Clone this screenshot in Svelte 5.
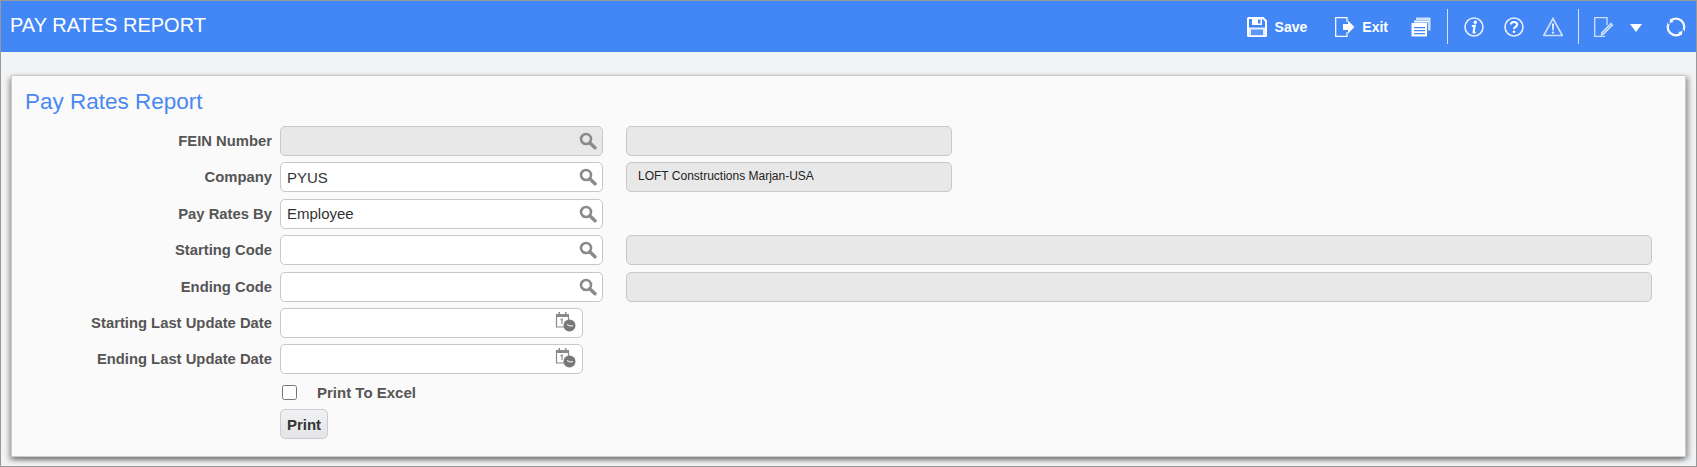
<script>
	const rows = [
		{ label: "FEIN Number", value: "", disabled: true, side: "short", sideText: "" },
		{ label: "Company", value: "PYUS", side: "short", sideText: "LOFT Constructions Marjan-USA" },
		{ label: "Pay Rates By", value: "Employee" },
		{ label: "Starting Code", value: "", side: "long", sideText: "" },
		{ label: "Ending Code", value: "", side: "long", sideText: "" }
	];
	const dates = ["Starting Last Update Date", "Ending Last Update Date"];
</script>

<div class="page">
	<header class="topbar">
		<h1>PAY RATES REPORT</h1>
		<div class="tools">
			<button class="tool save" type="button">
				<svg width="20" height="20" viewBox="0 0 20 20">
					<path d="M1.500 1h14.500l3 3v14.500a.5.5 0 0 1-.5.5H1.500a.5.5 0 0 1-.5-.5V1.500a.5.5 0 0 1 .5-.5z" fill="none" stroke="#fff" stroke-width="2" />
					<path d="M5 1h10v7H5z" fill="#fff" />
					<path d="M11 2.500h2.500v4H11z" fill="#4287f5" />
					<path d="M2 10.500h16V19H2z" fill="#e3edfd" />
					<path d="M4 12.500h12V18H4z" fill="#5d98f6" />
				</svg>
				Save
			</button>
			<button class="tool exit" type="button">
				<svg width="20" height="20" viewBox="0 0 20 20">
					<path d="M12 5V.7H.7v18.600H12V15" fill="none" stroke="#fff" stroke-width="1.200" />
					<path d="M8 7h5V3.500l6.500 6.500-6.500 6.500V13H8z" fill="#fff" />
				</svg>
				Exit
			</button>
			<button class="tool icon print" type="button" aria-label="Print">
				<svg width="20" height="20" viewBox="0 0 20 20">
					<path d="M5 .5h14.500v13H17V3H5z" fill="#cfe0fc" />
					<path d="M3 3.500h14v2H3z" fill="#fff" />
					<path d="M.5 6h15.500v13.500H.5z" fill="#fff" />
					<path d="M3 10h11v1.200H3zM3 13h11v1.200H3zM3 16h11v1.200H3z" fill="#4287f5" />
				</svg>
			</button>
			<span class="sep first"></span>
			<button class="tool icon info" type="button" aria-label="Info">
				<svg width="20" height="20" viewBox="0 0 20 20">
					<circle cx="10" cy="10" r="9" fill="none" stroke="#e3edfd" stroke-width="1.600" />
					<circle cx="11.300" cy="5.300" r="1.700" fill="#fff" />
					<path d="M7.800 9.300l3-.6-1.300 6.400c-.1.700.5.800 1.900-.2" fill="none" stroke="#fff" stroke-width="2" />
				</svg>
			</button>
			<button class="tool icon help" type="button" aria-label="Help">
				<svg width="20" height="20" viewBox="0 0 20 20">
					<circle cx="10" cy="10" r="9" fill="none" stroke="#e3edfd" stroke-width="1.600" />
					<path d="M6.800 7.500C7 5.800 8.300 5 10 5c1.900 0 3.200 1 3.200 2.600 0 2.300-3.200 2.300-3.200 4.400" fill="none" stroke="#fff" stroke-width="2" />
					<circle cx="10" cy="14.800" r="1.300" fill="#fff" />
				</svg>
			</button>
			<button class="tool icon warn" type="button" aria-label="Warnings">
				<svg width="20" height="20" viewBox="0 0 20 20">
					<path d="M10 1.500L19.300 18.500H.7z" fill="none" stroke="#cfe0fc" stroke-width="1.600" />
					<path d="M8.900 6.500h2.200l-.4 7H9.300z" fill="#e3edfd" />
					<circle cx="10" cy="15.600" r="1.200" fill="#e3edfd" />
				</svg>
			</button>
			<span class="sep"></span>
			<button class="tool icon edit" type="button" aria-label="Notes">
				<svg width="20" height="20" viewBox="0 0 20 20">
					<path d="M13 8V.7H.7v18.600H11" fill="none" stroke="#cfe0fc" stroke-width="1.300" />
					<path d="M6.500 19l.8-3.700L17 5.500l2.500 2.500-9.700 9.800z" fill="#cfe0fc" />
					<path d="M8.500 16.500l9-9" stroke="#7fadf8" stroke-width="1" />
				</svg>
			</button>
			<span class="caret"></span>
			<button class="tool icon refresh" type="button" aria-label="Refresh">
				<svg width="20" height="20" viewBox="0 0 20 20">
					<circle cx="10" cy="10" r="8.300" fill="none" stroke="#f2f6fe" stroke-width="2.300" />
					<path d="M1 3.500l3.500-.5 1 2.500-3 2zM19 16.500l-3.500.5-1-2.500 3-2z" fill="#4287f5" />
					<path d="M4.500 1.500l3 3.500-4 1zM15.500 18.500l-3-3.500 4-1z" fill="#fff" />
				</svg>
			</button>
		</div>
	</header>

	<main class="content">
		<section class="panel">
			<h2>Pay Rates Report</h2>
			<div class="form">
				{#each rows as row}
					<div class="row">
						<span class="label">{row.label}</span>
						<div class="field lookup" class:disabled={row.disabled}>
							<span class="value">{row.value}</span>
							<svg class="glass" width="18" height="18" viewBox="0 0 18 18">
								<circle cx="7" cy="7" r="5" fill="none" stroke="#8a8a8a" stroke-width="2.600" />
								<path d="M10.800 10.800l5.200 5" stroke="#8a8a8a" stroke-width="3.400" stroke-linecap="round" />
							</svg>
						</div>
						{#if row.side}
							<div class="side {row.side}">{row.sideText}</div>
						{/if}
					</div>
				{/each}
				{#each dates as date}
					<div class="row">
						<span class="label">{date}</span>
						<div class="field datefield">
							<svg class="cal" width="21" height="21" viewBox="0 0 21 21">
								<path d="M1.500 4h12v12h-12z" fill="#fff" stroke="#8a8a8a" stroke-width="1.200" />
								<path d="M1 3h13v3H1z" fill="#8a8a8a" />
								<path d="M3.500 1h1.500v3H3.500zM10 1h1.500v3H10z" fill="#8a8a8a" />
								<path d="M5.500 9l1.500-1v5" fill="none" stroke="#8a8a8a" stroke-width="1.200" />
								<circle cx="14.500" cy="14.500" r="6" fill="#777" />
								<path d="M12 13.500l3 1.500 3-.3" fill="none" stroke="#fff" stroke-width="1" />
							</svg>
						</div>
					</div>
				{/each}
				<label class="check">
					<input type="checkbox" />
					<span>Print To Excel</span>
				</label>
				<button class="print-btn" type="button">Print</button>
			</div>
		</section>
	</main>
</div>

<style>
	:global(body) {
		margin: 0;
		background: #f2f3f5;
	}

	.page {
		box-sizing: border-box;
		height: 467px;
		border: 1px solid #999;
		background: #f2f3f5;
		font-family: "Liberation Sans", Arial, sans-serif;
		display: flex;
		flex-direction: column;
	}

	.topbar {
		height: 51px;
		flex: none;
		background: #4287f5;
		display: flex;
		align-items: center;
		justify-content: space-between;
		color: #fff;
		padding: 0 10px 0 9px;
	}

	h1 {
		margin: 0;
		font-size: 20px;
		font-weight: 400;
		position: relative;
		top: -1px;
	}

	.tools {
		display: flex;
		align-items: center;
	}

	.tool {
		background: none;
		border: none;
		padding: 0;
		color: #fff;
		font: bold 14px "Liberation Sans", Arial, sans-serif;
		display: flex;
		align-items: center;
		gap: 8px;
		height: 20px;
	}

	.tool.icon {
		width: 20px;
	}

	.save {
		margin-right: 28px;
	}

	.exit {
		margin-right: 23px;
		gap: 7px;
	}

	.sep {
		width: 1px;
		height: 35px;
		background: #d5e3fc;
		margin: 0 15px;
	}

	.sep.first {
		margin: 0 16px;
	}

	.info {
		margin-right: 20px;
	}

	.help {
		margin-right: 19px;
	}

	.caret {
		width: 0;
		height: 0;
		border-left: 6px solid transparent;
		border-right: 6px solid transparent;
		border-top: 8px solid #fff;
		margin: 3px 24px 0 16px;
	}

	.content {
		flex: 1;
		padding: 23px 10px 9px;
		display: flex;
		min-height: 0;
	}

	.panel {
		flex: 1;
		box-sizing: border-box;
		background: #fafafa;
		border: 1px solid #ccc;
		box-shadow: -2px 3px 5px rgba(0, 0, 0, 0.35), 3px 2px 5px rgba(0, 0, 0, 0.3);
		padding: 12px 12px 0 13px;
	}

	h2 {
		margin: 0 0 10px;
		font-size: 22.500px;
		line-height: 28px;
		font-weight: 400;
		color: #4a88f0;
	}

	.form {
		display: flex;
		flex-direction: column;
		gap: 6.400px;
	}

	.row {
		display: flex;
		align-items: center;
		height: 30px;
	}

	.label {
		width: 247px;
		flex: none;
		text-align: right;
		font-size: 14.800px;
		font-weight: 700;
		color: #555;
		margin-right: 8px;
	}

	.field {
		box-sizing: border-box;
		height: 30px;
		border: 1px solid #c8c8c8;
		border-radius: 5px;
		background: #fff;
		display: flex;
		align-items: center;
		justify-content: space-between;
		font-size: 15px;
		color: #333;
		padding: 0 5px 0 6px;
	}

	.lookup {
		width: 323px;
	}

	.datefield {
		width: 303px;
		justify-content: flex-end;
		padding-right: 6px;
	}

	.cal {
		margin-bottom: 3px;
	}

	.disabled {
		background: #e8e8e8;
	}

	.side {
		box-sizing: border-box;
		height: 30px;
		margin-left: 23px;
		background: #e8e8e8;
		border: 1px solid #c8c8c8;
		border-radius: 5px;
		font-size: 12px;
		line-height: 26px;
		color: #222;
		padding-left: 11px;
	}

	.side.short {
		width: 326px;
	}

	.side.long {
		width: 1026px;
	}

	.check {
		display: flex;
		align-items: center;
		height: 15px;
		margin: 4px 0 0 257px;
		font-size: 15px;
		font-weight: 700;
		color: #555;
	}

	.check input {
		width: 15px;
		height: 15px;
		margin: 0 20px 0 0;
	}

	.print-btn {
		box-sizing: border-box;
		align-self: flex-start;
		margin: 3px 0 0 255px;
		width: 48px;
		height: 30px;
		padding: 0;
		border: 1px solid #ccc;
		border-radius: 5px;
		background: linear-gradient(#f0f1f3, #e3e5e8);
		font: bold 15px "Liberation Sans", Arial, sans-serif;
		color: #333;
	}
</style>
